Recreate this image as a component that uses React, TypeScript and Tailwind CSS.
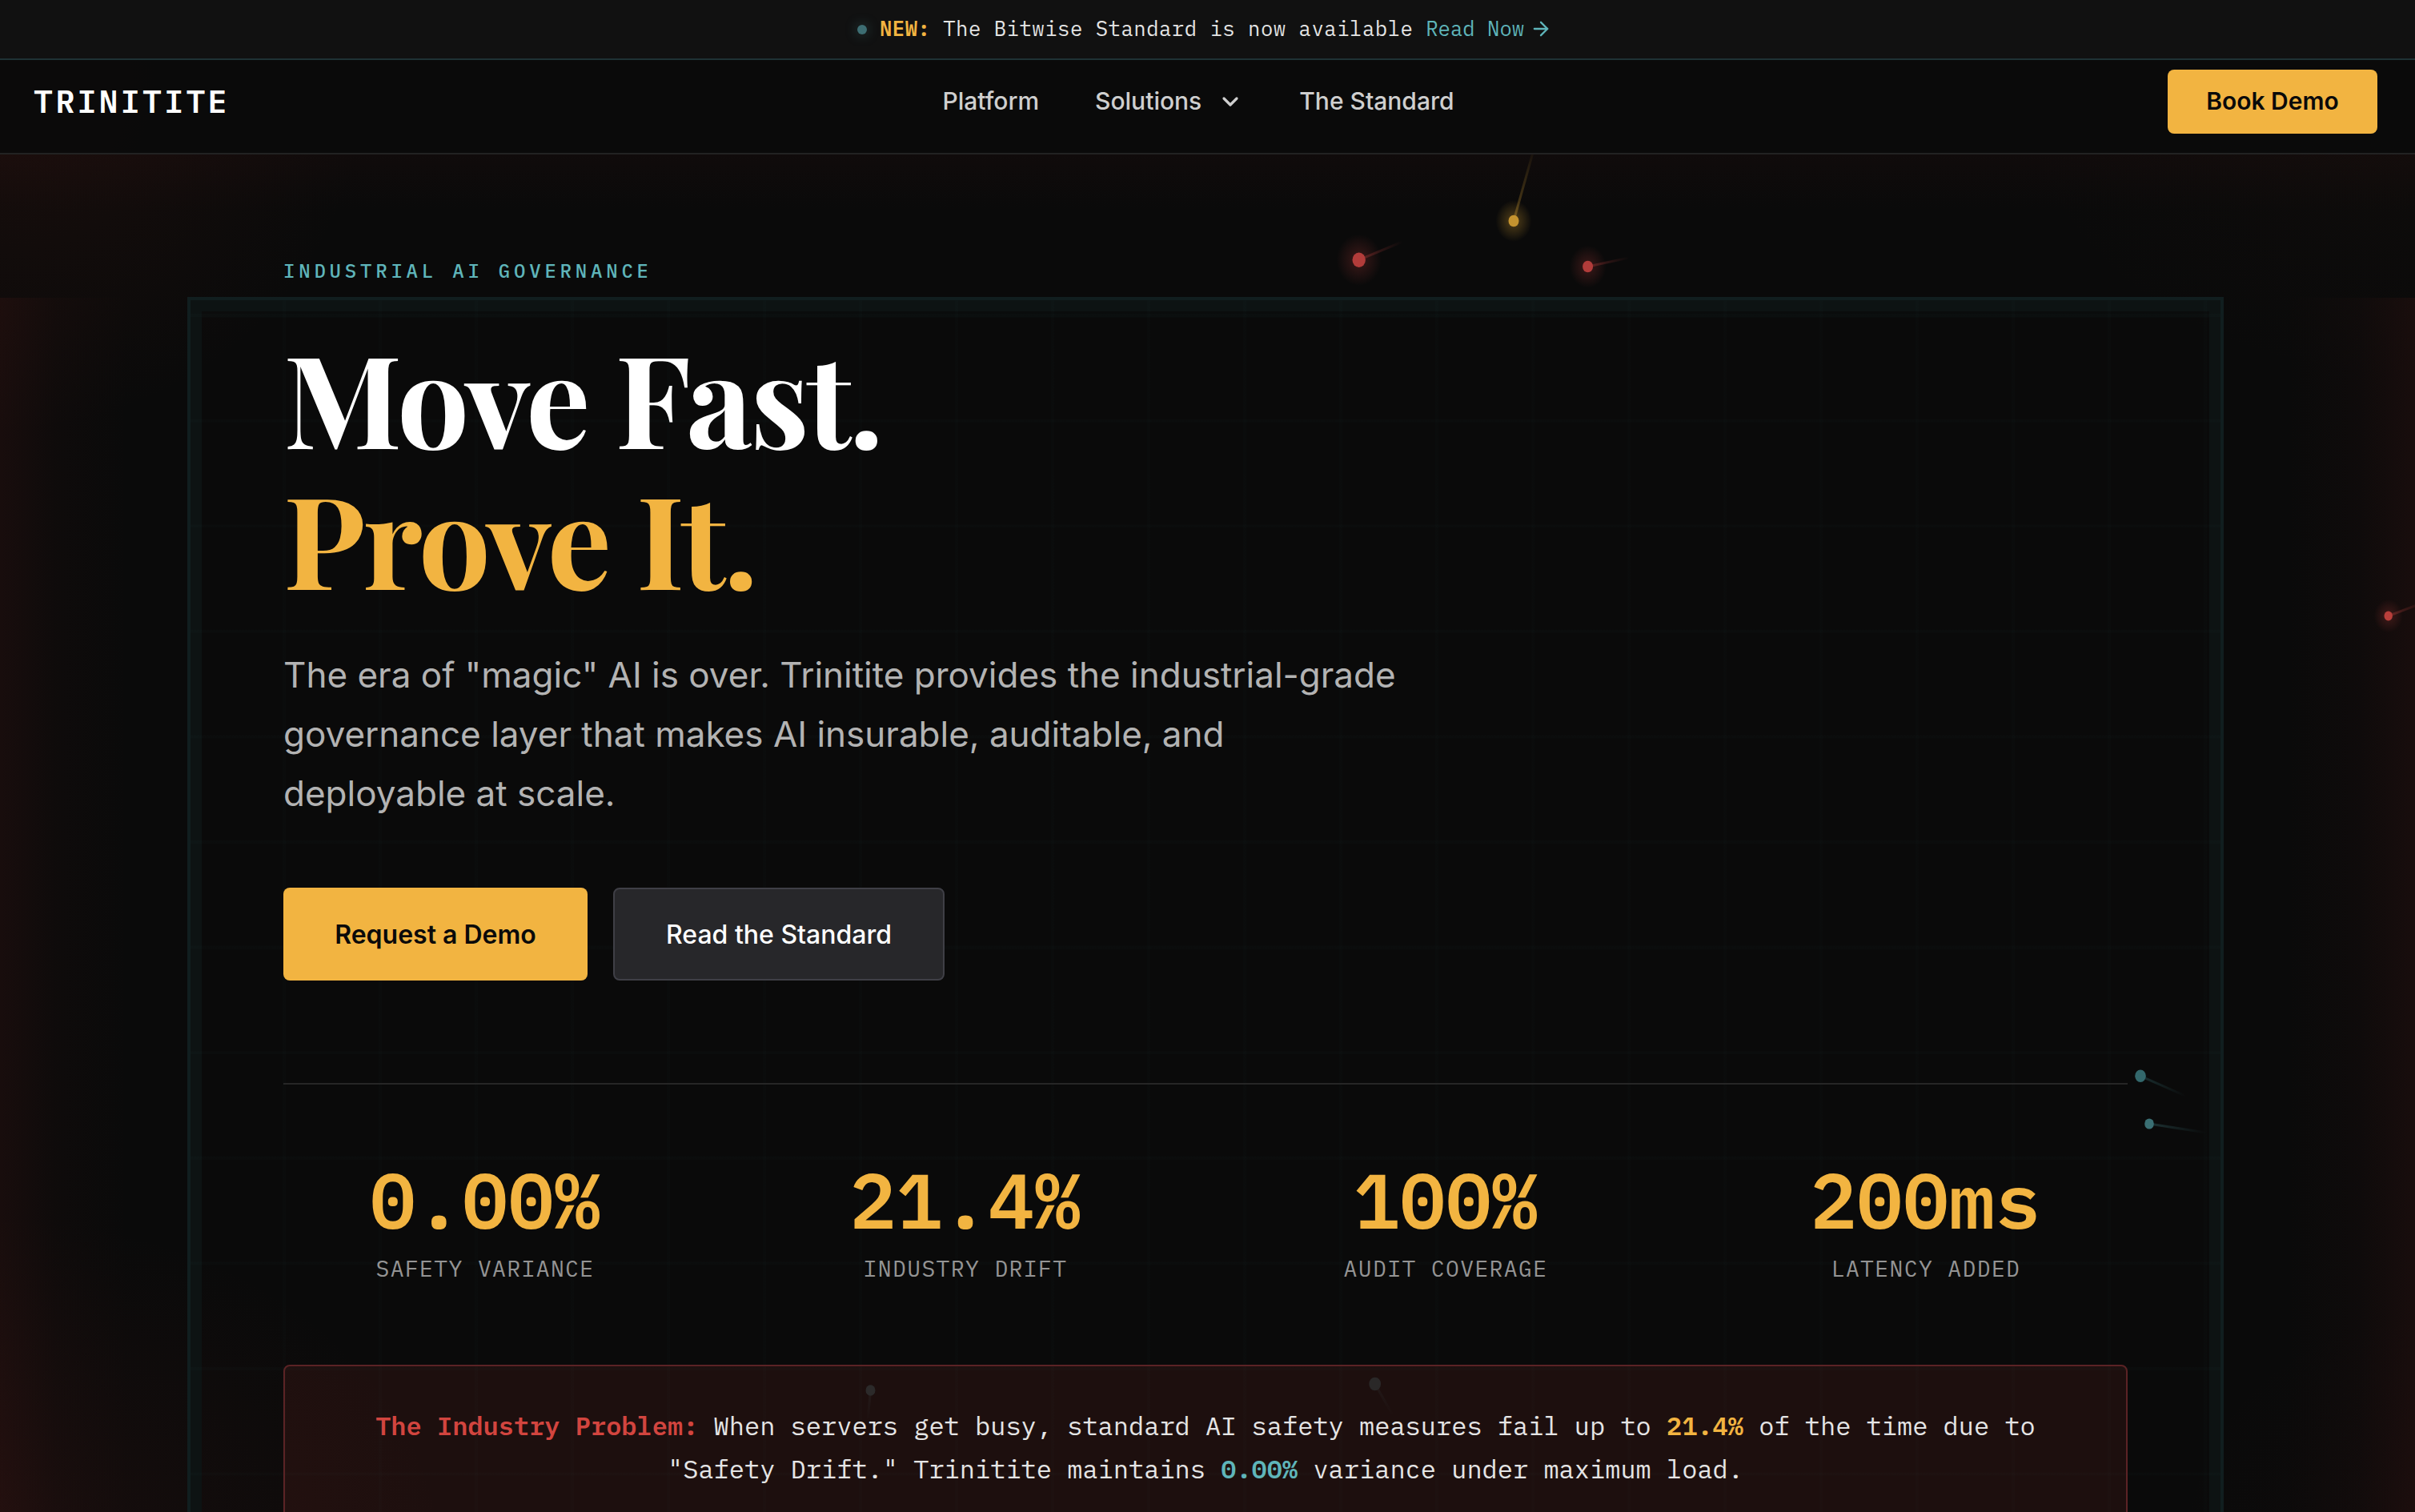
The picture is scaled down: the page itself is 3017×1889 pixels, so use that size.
import { ArrowRight, ChevronDown } from "lucide-react"

const mono = "font-['IBM_Plex_Mono','Liberation_Mono',monospace]"

const stats = [
  { value: "0.00%", label: "SAFETY VARIANCE" },
  { value: "21.4%", label: "INDUSTRY DRIFT" },
  { value: "100%", label: "AUDIT COVERAGE" },
  { value: "200ms", label: "LATENCY ADDED" },
]

const particles = [
  { x: 1697.7, y: 324.7, r: 8.2, glow: 28, tx: 1752, ty: 302, color: "#b13c3a", fade: 0.3 },
  { x: 1891, y: 276, r: 6.5, glow: 22.5, tx: 1918, ty: 180, color: "#c4932f", fade: 0.4 },
  { x: 1983.6, y: 333, r: 6.5, glow: 23, tx: 2035, ty: 322, color: "#b13c3a", fade: 0.3 },
  { x: 2983.7, y: 769.5, r: 5.2, glow: 18, tx: 3030, ty: 752, color: "#b83f3b", fade: 0.28 },
  { x: 2674, y: 1344.3, r: 6.8, glow: 0, tx: 2730, ty: 1369, color: "#33686c", fade: 0 },
  { x: 2685, y: 1404, r: 5.8, glow: 0, tx: 2756, ty: 1415, color: "#3a6f73", fade: 0 },
  { x: 1087.5, y: 1737, r: 6, glow: 0, tx: 1084, ty: 1775, color: "#1a2829", fade: 0 },
  { x: 1717.7, y: 1729, r: 7.4, glow: 0, tx: 1740, ty: 1768, color: "#182526", fade: 0 },
]

function Particles() {
  return (
    <svg className="pointer-events-none absolute inset-0 z-0 h-full w-full" viewBox="0 0 3017 1889">
      {particles.map((p, i) => (
        <g key={i}>
          <defs>
            <radialGradient id={`glow-${i}`}>
              <stop offset="0" stopColor={p.color} stopOpacity={p.fade} />
              <stop offset="1" stopColor={p.color} stopOpacity="0" />
            </radialGradient>
            <linearGradient id={`trail-${i}`} gradientUnits="userSpaceOnUse" x1={p.x} y1={p.y} x2={p.tx} y2={p.ty}>
              <stop offset="0" stopColor={p.color} stopOpacity="0.4" />
              <stop offset="1" stopColor={p.color} stopOpacity="0" />
            </linearGradient>
          </defs>
          <ellipse cx={p.x} cy={p.y} rx={p.glow} ry={p.glow * 1.15} fill={`url(#glow-${i})`} />
          <line x1={p.x} y1={p.y} x2={p.tx} y2={p.ty} stroke={`url(#trail-${i})`} strokeWidth="3" />
          <ellipse cx={p.x} cy={p.y} rx={p.r} ry={p.r * 1.13} fill={p.color} />
        </g>
      ))}
    </svg>
  )
}

function Backdrop() {
  return (
    <div className="pointer-events-none absolute inset-0 overflow-hidden">
      <div className="absolute inset-0 bg-[radial-gradient(ellipse_460px_440px_at_0px_100px,rgba(130,40,25,0.13),transparent),radial-gradient(ellipse_500px_360px_at_3017px_120px,rgba(110,50,25,0.05),transparent),radial-gradient(ellipse_560px_440px_at_0px_1960px,rgba(130,40,35,0.12),transparent),radial-gradient(ellipse_300px_300px_at_3017px_1940px,rgba(140,35,35,0.04),transparent)]" />
      <div className="absolute inset-x-0 top-[193px] h-[70px] bg-linear-to-b from-[#3c1414]/12 to-transparent" />
      <div className="absolute inset-x-0 top-[372px] bottom-0 bg-[linear-gradient(to_right,rgba(150,40,35,0.1),rgba(140,40,35,0.035)_70px,transparent_160px,transparent_calc(100%-160px),rgba(140,40,35,0.035)_calc(100%-70px),rgba(150,40,35,0.1))]" />
      {/* Containment frame */}
      <div className="absolute top-[371px] right-[239px] -bottom-10 left-[234px] border-4 border-[#111e1f]">
        <div className="absolute inset-0 border-14 border-[#0d1414]/90 shadow-[inset_0_8px_0_rgba(70,180,180,0.015)]" />
        <div className="absolute inset-0 bg-[linear-gradient(to_right,rgba(70,180,180,0.013)_4px,transparent_4px),linear-gradient(to_bottom,rgba(70,180,180,0.016)_4px,transparent_4px)] bg-[size:120px_131.6px] bg-position-[-5px_17px]" />
      </div>
    </div>
  )
}

export default function App() {
  return (
    <div className="relative h-[1889px] w-[3017px] overflow-hidden bg-[#0a0a0a] font-[Inter,sans-serif] text-white">
      <Backdrop />
      <Particles />

      <div className={`relative z-10 flex h-[75px] items-center justify-center gap-4 border-b-2 border-[#1f3235] bg-[#111111] pr-[7px] text-[25.6px] tracking-[0.02em] text-[#e5e5e5] ${mono}`}>
        <span className="size-3 rounded-full bg-[#3d6d72] shadow-[0_0_16px_rgba(95,181,186,0.35)]" />
        <p>
          <span className="font-semibold text-[#f2b441]">NEW:</span> The Bitwise Standard is now available{" "}
          <a href="#standard" className="inline-flex items-center gap-[7px] tracking-normal text-[#5fb5ba]">
            Read Now <ArrowRight className="size-7" />
          </a>
        </p>
      </div>

      <header className="relative z-10 flex h-[118px] items-center justify-between border-b-2 border-[#222222] bg-[#0a0a0a]/90 pr-[47px] pb-[13px] pl-[42px]">
        <div className={`w-[244px] pb-px text-[40px] font-semibold tracking-[0.08em] ${mono}`}>TRINITITE</div>
        <nav className="flex items-center gap-[70px] text-[30px] font-medium text-[#cfcfcf]">
          <a href="#platform">Platform</a>
          <a href="#solutions" className="flex items-center gap-5">
            Solutions <ChevronDown className="size-8" strokeWidth={2.4} />
          </a>
          <a href="#standard">The Standard</a>
        </nav>
        <a href="#demo" className="flex h-20 w-[262px] items-center justify-center rounded-lg bg-[#f2b441] text-[30px] font-semibold text-[#0a0a0a]">
          Book Demo
        </a>
      </header>

      <main className="relative z-10 ml-[354px] w-[2304px] pt-[125px]">
        <p className={`text-[24px] leading-[40px] font-medium tracking-[0.2em] text-[#5fb5ba] ${mono}`}>INDUSTRIAL AI GOVERNANCE</p>

        <h1 className="mt-[49px] font-['Playfair_Display','Liberation_Serif',serif] text-[160px] leading-[176px] font-bold tracking-[-0.02em]">
          <span className="block">Move Fast.</span>
          <span className="block text-[#f2b441]">Prove It.</span>
        </h1>

        <p className="mt-[47px] w-[1400px] text-[44px] leading-[74px] text-[#b3b3b3]">
          The era of "magic" AI is over. Trinitite provides the industrial-grade governance layer that makes AI insurable, auditable, and deployable at scale.
        </p>

        <div className="mt-[81px] flex gap-8 text-[32px]">
          <a href="#demo" className="flex h-[116px] w-[380px] items-center justify-center rounded-lg bg-[#f2b441] pt-0.5 font-semibold text-[#0a0a0a]">
            Request a Demo
          </a>
          <a href="#standard" className="flex h-[116px] w-[414px] items-center justify-center rounded-lg border-2 border-[#3f3f46] bg-[#27272a] pt-0.5 font-medium">
            Read the Standard
          </a>
        </div>

        <div className="mt-32 grid grid-cols-4 gap-24 border-t-2 border-[#262626] pt-[95px]">
          {stats.map((stat) => (
            <div key={stat.label} className={`text-center ${mono}`}>
              <p className="text-[96px] leading-[98px] font-semibold text-[#f2b441]">{stat.value}</p>
              <p className="mt-[13px] text-[28px] leading-[48px] tracking-[0.05em] text-[#949494]">{stat.label}</p>
            </div>
          ))}
        </div>

        <div className={`mt-24 rounded-lg border-2 border-[#5b2325] bg-[#d2403c]/10 pt-[47px] pb-12 text-center text-[32px] leading-[54.4px] text-[#e5e5e5] ${mono}`}>
          <span className="font-semibold text-[#d2453f]">The Industry Problem:</span> When servers get busy, standard AI safety measures fail up to{" "}
          <span className="font-semibold text-[#f2b441]">21.4%</span> of the time due to
          <br />
          "Safety Drift." Trinitite maintains <span className="font-semibold text-[#5fb5ba]">0.00%</span> variance under maximum load.
        </div>
      </main>
    </div>
  )
}
